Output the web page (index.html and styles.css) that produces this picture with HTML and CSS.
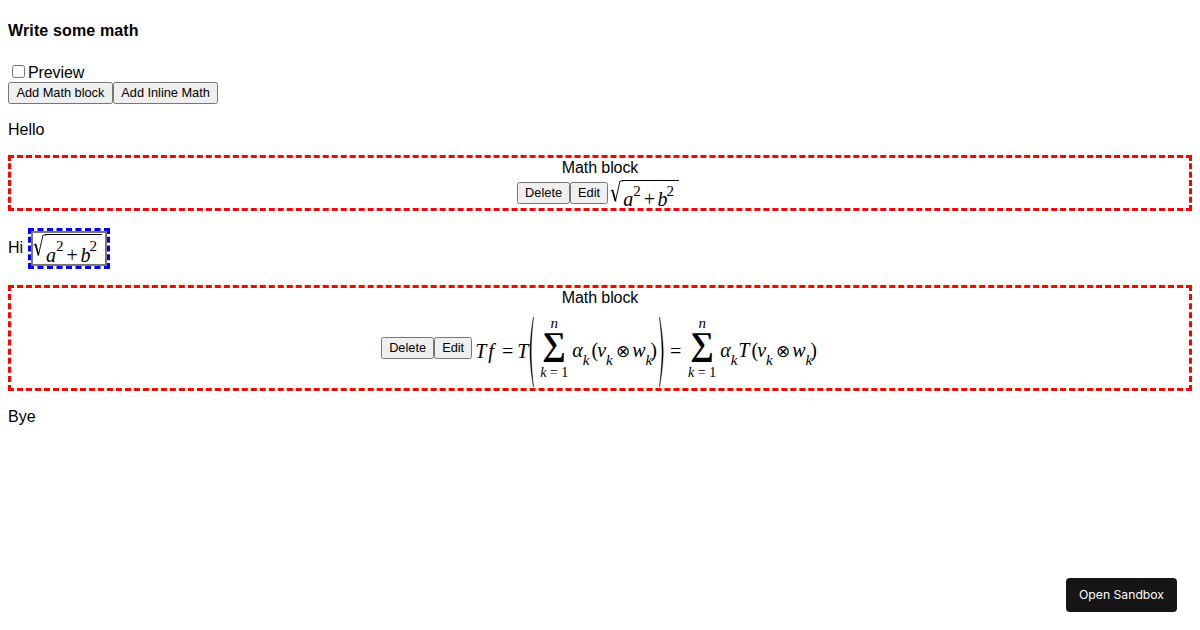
FILE: index.html
```html
<!DOCTYPE html>
<html lang="en">
<head>
<meta charset="utf-8">
<title>Write some math</title>
<link rel="stylesheet" href="styles.css">
</head>
<body>
<h3 class="title">Write some math</h3>
<label class="preview"><input type="checkbox">Preview</label>
<div class="toolbar"><button>Add Math block</button><button>Add Inline Math</button></div>
<p>Hello</p>
<div class="block">
  <div class="block-label">Math block</div>
  <div class="block-row row-small">
    <button>Delete</button><button>Edit</button>
    <span class="sqrt">
      <svg class="surd" width="13" height="24" viewBox="0 0 13 24"><path d="M0.5 11 L2.4 9.9 L5.6 20.5 L10 1 L13 1" fill="none" stroke="#000" stroke-width="0.9"/><path d="M2.4 10 L5.6 21.5" stroke="#000" stroke-width="1.6"/></svg>
      <span class="radicand"><i>a</i><sup>2</sup><span class="plus">+</span><i>b</i><sup class="sup-b">2</sup></span>
    </span>
  </div>
</div>
<div class="hi">
  <span class="hi-text">Hi</span>
  <span class="inline-math"><span class="inline-inner">
    <span class="sqrt">
      <svg class="surd" width="13" height="24" viewBox="0 0 13 24"><path d="M0.5 11 L2.4 9.9 L5.6 20.5 L10 1 L13 1" fill="none" stroke="#000" stroke-width="0.9"/><path d="M2.4 10 L5.6 21.5" stroke="#000" stroke-width="1.6"/></svg>
      <span class="radicand"><i>a</i><sup>2</sup><span class="plus">+</span><i>b</i><sup class="sup-b">2</sup></span>
    </span>
  </span></span>
</div>
<div class="block">
  <div class="block-label">Math block</div>
  <div class="block-row row-large">
    <button>Delete</button><button>Edit</button>
    <span class="formula">
      <span class="run run-lead"><i>T</i><i class="f">f</i><span class="eq">=</span><i class="t2">T</i></span>
      <svg class="paren" width="9" height="70" viewBox="0 0 9 70"><path d="M5.5 0 C3 14 2 26 2 35 C2 44 3 56 5.5 70 C4 56 3.2 44 3.2 35 C3.2 26 4 14 5.5 0 Z" fill="#000" stroke="#000" stroke-width="0.4"/></svg>
      <span class="sum"><span class="limit">n</span><span class="sigma">∑</span><span class="limit lower"><i>k</i> = 1</span></span>
      <span class="run run-a"><i class="alpha">α</i><sub>k</sub><span class="po">(</span><i>v</i><sub>k</sub><span class="otimes">⊗</span><i class="w">w</i><sub>k</sub><span class="pc">)</span></span>
      <svg class="paren" width="9" height="70" viewBox="0 0 9 70"><path d="M0.5 0 C3 14 4.2 26 4.2 35 C4.2 44 3 56 0.5 70 C2 56 3 44 3 35 C3 26 2 14 0.5 0 Z" fill="#000" stroke="#000" stroke-width="0.4"/></svg>
      <span class="run"><span class="eq eq2">=</span></span>
      <span class="sum sum2"><span class="limit">n</span><span class="sigma">∑</span><span class="limit lower"><i>k</i> = 1</span></span>
      <span class="run run-b"><i class="alpha">α</i><sub>k</sub><i class="t3">T</i><span class="po">(</span><i>v</i><sub>k</sub><span class="otimes">⊗</span><i class="w">w</i><sub>k</sub><span class="pc">)</span></span>
    </span>
  </div>
</div>
<p class="bye">Bye</p>
<a class="sandbox">Open Sandbox</a>
</body>
</html>
```
FILE: styles.css
```css
html, body {
  font-family: "Liberation Sans", Arial, sans-serif;
  font-size: 16px;
  color: #000;
  background: #fff;
}
body { margin: 8px; }
.title { font-size: 16px; letter-spacing: 0.14px; font-weight: 700; margin: 14px 0 24px; line-height: 18px; }
.preview { display: block; line-height: 18px; letter-spacing: -0.1px; margin-top: -2px; }
.preview input { margin: 3px 3px 3px 4px; }
button {
  font-family: "Liberation Sans", Arial, sans-serif;
  font-size: 12.8px;
  height: 22px;
  padding: 0 6px 1px;
  flex: none;
}
.toolbar { display: flex; padding-bottom: 1px; }
.toolbar button { padding: 0 6.5px 1px; letter-spacing: -0.03px; }
p { margin: 16px 0; line-height: 18px; }
.bye { padding-top: 1px; }
.block {
  border: 3px dashed red;
  text-align: center;
}
.block-label { letter-spacing: -0.1px; line-height: 20px; height: 20px; }
.block-row { display: flex; justify-content: center; align-items: center; }
.row-small { height: 30px; }
.row-large { height: 80px; }

/* math */
.sqrt {
  display: inline-flex;
  align-items: flex-start;
  height: 32px;
  font-family: "Liberation Serif", serif;
  font-size: 20px;
}
.row-small .sqrt { margin: 0 4px 0 2px; }
.surd { margin-top: 3px; flex: none; }
.radicand {
  display: block;
  height: 27px;
  margin-top: 3px;
  margin-left: -1px;
  padding: 0 5px 0 1px;
  border-top: 1px solid #000;
  line-height: 36px;
  white-space: nowrap;
}
.radicand sup { font-size: 15px; line-height: 0; vertical-align: 10px; }
.radicand .sup-b { margin-left: -1px; }
.plus { margin: 0 2.5px 0 3px; }
.hi {
  display: flex;
  align-items: center;
  gap: 5px;
  margin: 17px 0 16px;
}
.hi-text { padding-bottom: 2px; }
.inline-math { display: block; border: 3px dashed blue; }
.inline-inner { display: block; border: 2px solid #777; padding: 0 3px 0 0; height: 31px; }
.inline-inner .sqrt { margin-top: -2px; }
.inline-inner .radicand { line-height: 40px; }
.inline-inner sup { vertical-align: 11px; }

.formula {
  display: inline-flex;
  align-items: center;
  height: 80px;
  margin-right: 2px;
  font-family: "Liberation Serif", serif;
  font-size: 20px;
  white-space: nowrap;
}
.run { display: block; padding-top: 6px; line-height: 24px; }
.run-lead { margin-left: 3px; }
.f { margin-left: 2px; }
.eq { display: inline-block; margin-left: 8px; font-style: normal; }
.t2 { margin-left: 4px; }
.eq2 { margin-left: 2px; }
.paren { flex: none; margin-top: 8px; }
.sum {
  display: flex;
  flex-direction: column;
  align-items: center;
  width: 28px;
  margin-left: 3px;
  line-height: 1;
}
.sum2 { margin-left: 7px; }
.limit { font-size: 15px; font-style: italic; line-height: 14px; }
.lower { font-style: normal; font-size: 14px; white-space: nowrap; }
.sigma { font-size: 33px; line-height: 28px; padding-bottom: 8px; font-weight: 700; }
.run-a { margin: 0 2px 0 4px; }
.run-b { margin-left: 4px; }
.run sub { font-size: 15px; font-style: italic; line-height: 0; vertical-align: -8px; }
.po { margin-left: 2px; margin-right: -1px; }
.t3 { margin-left: 1px; }
.otimes { margin-left: 3px; font-size: 17px; }
.w { margin-left: 2.5px; }
.pc { margin-left: -2px; }

.sandbox {
  position: fixed;
  right: 23px;
  bottom: 18px;
  width: 111px;
  height: 34px;
  box-sizing: border-box;
  background: #151515;
  color: #fff;
  border-radius: 4px;
  font-family: Inter, sans-serif;
  font-size: 12.2px;
  line-height: 34px;
  text-align: center;
}
```
